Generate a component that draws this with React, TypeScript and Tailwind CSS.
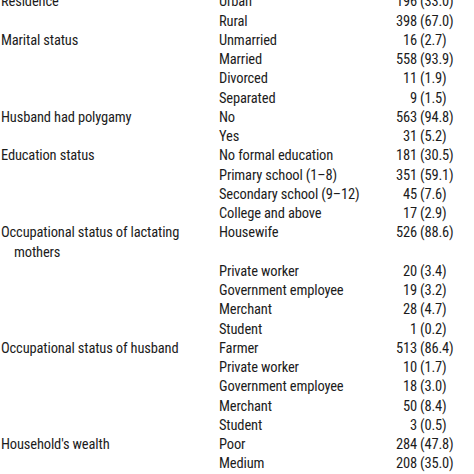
type Item = { label: string; n: string; pct: string };
type Group = { name: string; items: Item[] };

const groups: Group[] = [
  {
    name: "Residence",
    items: [
      { label: "Urban", n: "196", pct: "(33.0)" },
      { label: "Rural", n: "398", pct: "(67.0)" },
    ],
  },
  {
    name: "Marital status",
    items: [
      { label: "Unmarried", n: "16", pct: "(2.7)" },
      { label: "Married", n: "558", pct: "(93.9)" },
      { label: "Divorced", n: "11", pct: "(1.9)" },
      { label: "Separated", n: "9", pct: "(1.5)" },
    ],
  },
  {
    name: "Husband had polygamy",
    items: [
      { label: "No", n: "563", pct: "(94.8)" },
      { label: "Yes", n: "31", pct: "(5.2)" },
    ],
  },
  {
    name: "Education status",
    items: [
      { label: "No formal education", n: "181", pct: "(30.5)" },
      { label: "Primary school (1–8)", n: "351", pct: "(59.1)" },
      { label: "Secondary school (9–12)", n: "45", pct: "(7.6)" },
      { label: "College and above", n: "17", pct: "(2.9)" },
    ],
  },
  {
    name: "Occupational status of lactating mothers",
    items: [
      { label: "Housewife", n: "526", pct: "(88.6)" },
      { label: "Private worker", n: "20", pct: "(3.4)" },
      { label: "Government employee", n: "19", pct: "(3.2)" },
      { label: "Merchant", n: "28", pct: "(4.7)" },
      { label: "Student", n: "1", pct: "(0.2)" },
    ],
  },
  {
    name: "Occupational status of husband",
    items: [
      { label: "Farmer", n: "513", pct: "(86.4)" },
      { label: "Private worker", n: "10", pct: "(1.7)" },
      { label: "Government employee", n: "18", pct: "(3.0)" },
      { label: "Merchant", n: "50", pct: "(8.4)" },
      { label: "Student", n: "3", pct: "(0.5)" },
    ],
  },
  {
    name: "Household's wealth",
    items: [
      { label: "Poor", n: "284", pct: "(47.8)" },
      { label: "Medium", n: "208", pct: "(35.0)" },
    ],
  },
];

export default function App() {
  return (
    <div className="w-[474px] h-[474px] overflow-hidden bg-white text-[#1c1c1c]">
      <div className="grid grid-cols-[218px_152px_46px_1fr] pl-[1px] -mt-[7.6px] text-[14.5px] tracking-[-0.15px] leading-[19.25px] font-['Roboto_Condensed',Roboto,sans-serif] font-stretch-condensed whitespace-nowrap">
        {groups.map((g) =>
          g.items.map((it, i) => (
            <div key={g.name + it.label} className="contents">
              <div className="w-[190px] pl-[13px] -indent-[13px] whitespace-normal">{i === 0 ? g.name : ""}</div>
              <div>{it.label}</div>
              <div className="text-right">{it.n}</div>
              <div className="pl-[3px]">{it.pct}</div>
            </div>
          ))
        )}
      </div>
    </div>
  );
}
